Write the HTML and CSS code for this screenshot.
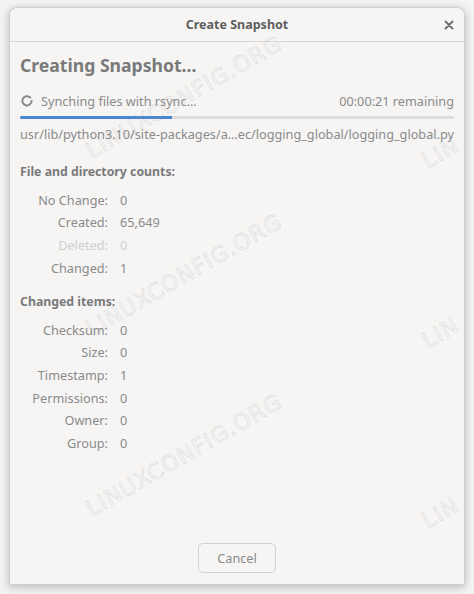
FILE: index.html
```html
<!DOCTYPE html>
<html>
<head>
<meta charset="utf-8">
<link rel="stylesheet" href="styles.css">
</head>
<body>
<div class="window">
  <div class="titlebar">
    <span class="title">Create Snapshot</span>
    <svg class="close" width="10" height="10" viewBox="0 0 10 10"><path d="M1.5 1.5 L8.5 8.5 M8.5 1.5 L1.5 8.5" stroke="#6a6a6a" stroke-width="1.8" stroke-linecap="round"/></svg>
  </div>
  <div class="content">
    <h1 class="heading">Creating Snapshot...</h1>
    <div class="status">
      <svg class="spinner" width="12" height="12" viewBox="0 0 12 12"><path d="M9.2 2.5 A4.6 4.6 0 1 0 10.6 6" fill="none" stroke="#8a8a8a" stroke-width="2" stroke-linecap="round"/></svg>
      <span class="status-text">Synching files with rsync...</span>
      <span class="remaining">00:00:21 remaining</span>
    </div>
    <div class="progress"><div class="progress-fill" style="width:35%"></div></div>
    <div class="path">usr/lib/python3.10/site-packages/a…ec/logging_global/logging_global.py</div>

    <div class="section-title">File and directory counts:</div>
    <div class="grid">
      <span class="label">No Change:</span><span class="value">0</span>
      <span class="label">Created:</span><span class="value">65,649</span>
      <span class="label dim">Deleted:</span><span class="value dim">0</span>
      <span class="label">Changed:</span><span class="value">1</span>
    </div>

    <div class="section-title second">Changed items:</div>
    <div class="grid">
      <span class="label">Checksum:</span><span class="value">0</span>
      <span class="label">Size:</span><span class="value">0</span>
      <span class="label">Timestamp:</span><span class="value">1</span>
      <span class="label">Permissions:</span><span class="value">0</span>
      <span class="label">Owner:</span><span class="value">0</span>
      <span class="label">Group:</span><span class="value">0</span>
    </div>

    <div class="actions">
      <button class="btn">Cancel</button>
    </div>
  </div>
</div>
<div class="wm wm1">LINUXCONFIG.ORG</div>
<div class="wm wm2">LINUXCONFIG.ORG</div>
<div class="wm wm3">LINUXCONFIG.ORG</div>
<div class="wm wm5">LIN</div>
<div class="wm wm6">LIN</div>
<div class="wm wm7">LIN</div>
</body>
</html>
```

FILE: styles.css
```css
* { box-sizing: border-box; }
html, body { margin: 0; }
body {
  width: 474px;
  height: 594px;
  padding: 7px 9px 9px 9px;
  background: #f3f3f3;
  font-family: "Noto Sans", "Open Sans", sans-serif;
  font-size: 12.7px;
  color: #888;
  overflow: hidden;
  position: relative;
}
.window {
  width: 456px;
  height: 578px;
  background: #f6f5f4;
  border: 1px solid #cfcfcf;
  border-radius: 8px 8px 0 0;
  box-shadow: 0 2px 8px rgba(0,0,0,0.25);
  display: flex;
  flex-direction: column;
}
.titlebar {
  height: 34px;
  flex: none;
  border-bottom: 1px solid #d8d6d4;
  display: flex;
  align-items: center;
  justify-content: center;
  position: relative;
  background: #f6f5f4;
  border-radius: 8px 8px 0 0;
}
.title {
  font-weight: bold;
  font-size: 12.5px;
  color: #5e5e5e;
}
.close {
  position: absolute;
  right: 10px;
  top: 12px;
}
.content {
  flex: 1;
  display: flex;
  flex-direction: column;
  padding: 9px 10px 11px 10px;
}
.heading {
  margin: 0;
  font-size: 17.6px;
  line-height: 28px;
  font-weight: bold;
  color: #7a7a7a;
}
.status {
  margin-top: 12px;
  display: flex;
  align-items: center;
  line-height: 20px;
  color: #8a8a8a;
}
.spinner { margin: 0 8px 0 1px; flex: none; }
.status-text { flex: 1; }
.remaining { color: #8a8a8a; }
.progress {
  margin-top: 5px;
  height: 3px;
  background: #dcdcdc;
  border-radius: 2px;
  overflow: hidden;
}
.progress-fill {
  height: 100%;
  background: #4a86d4;
}
.path {
  margin-top: 5px;
  line-height: 20px;
  color: #8a8a8a;
  white-space: nowrap;
}
.section-title {
  margin-top: 18px;
  line-height: 20px;
  font-size: 12.3px;
  font-weight: bold;
  color: #7a7a7a;
}
.section-title.second { margin-top: 12.5px; }
.grid {
  margin-top: 6.6px;
  display: grid;
  grid-template-columns: 88px auto;
  column-gap: 12px;
  line-height: 22.7px;
  justify-content: start;
}
.label { text-align: right; color: #8a8a8a; }
.value { color: #8a8a8a; }
.dim { color: #d0cfce; }
.actions {
  margin-top: auto;
  display: flex;
  justify-content: center;
}
.btn {
  width: 78px;
  height: 30px;
  border: 1px solid #d4d2d0;
  border-radius: 5px;
  background: #f6f5f4;
  font-family: inherit;
  font-size: 12.7px;
  color: #8a8a8a;
}
.wm {
  position: absolute;
  font-family: "DejaVu Sans", sans-serif;
  font-size: 22px;
  letter-spacing: 1px;
  color: transparent;
  -webkit-text-stroke: 0.5px rgba(150,150,150,0.4);
  transform: rotate(-30deg);
  transform-origin: left center;
  white-space: nowrap;
  pointer-events: none;
}
.wm1 { left: 88px; top: 140px; }
.wm2 { left: 88px; top: 318px; }
.wm3 { left: 88px; top: 498px; }
.wm5 { left: 424px; top: 150px; }
.wm6 { left: 424px; top: 330px; }
.wm7 { left: 424px; top: 510px; }
```
